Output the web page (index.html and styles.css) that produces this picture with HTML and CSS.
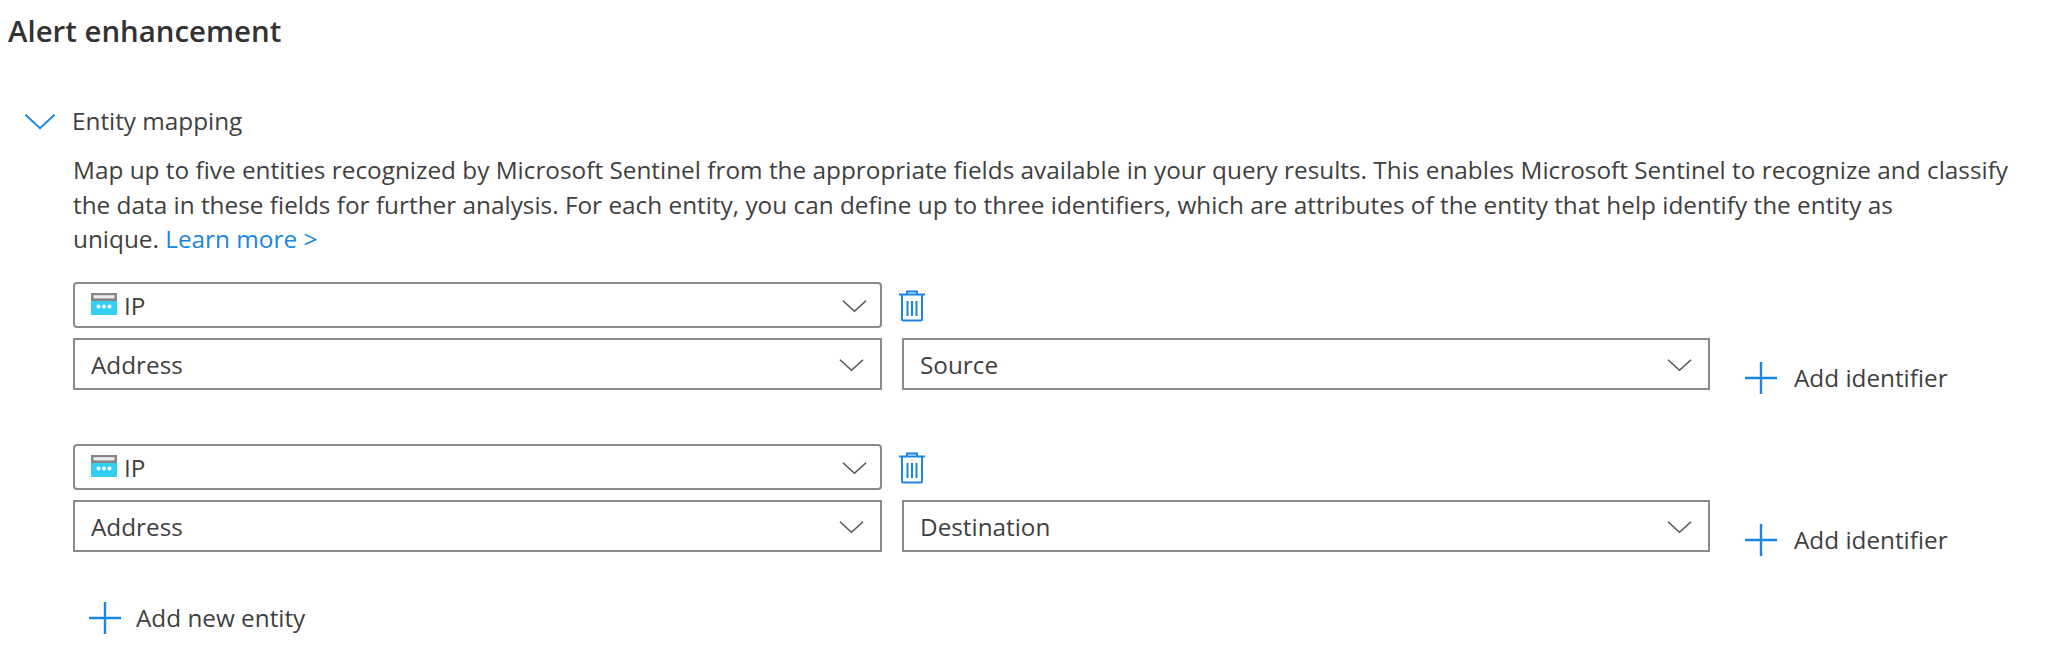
FILE: index.html
```html
<!DOCTYPE html>
<html lang="en">
<head>
<meta charset="utf-8">
<title>Alert enhancement</title>
<link rel="stylesheet" href="styles.css">
</head>
<body>
<svg class="defs" width="0" height="0" aria-hidden="true">
  <symbol id="chev" viewBox="0 0 26 14"><path d="M1 1.5 13 12.5 25 1.5" fill="none" stroke="currentColor" stroke-width="1.6"/></symbol>
  <symbol id="plus" viewBox="0 0 32 32"><path d="M16 0V32M0 16H32" fill="none" stroke="#1a86e0" stroke-width="2.4"/></symbol>
  <symbol id="trash" viewBox="0 0 26 32">
    <path d="M0 4.5H26M8 4V1.5H18V4M3 5V29A1.5 1.5 0 0 0 4.5 30.5H21.500A1.500 1.500 0 0 0 23 29V5M8.500 11V26M13 11V26M17.500 11V26" fill="none" stroke="#1a86e0" stroke-width="2"/>
  </symbol>
  <symbol id="ip" viewBox="0 0 26 22">
    <rect width="26" height="22" fill="#32d0f2"/>
    <rect width="26" height="8" fill="#858585"/>
    <rect x="2.5" y="2.2" width="21" height="3.200" fill="#eeeeee"/>
    <circle cx="7.500" cy="13.500" r="2" fill="#fff"/><circle cx="13" cy="13.500" r="2" fill="#fff"/><circle cx="18.500" cy="13.500" r="2" fill="#fff"/>
  </symbol>
</svg>
<main class="page">
  <h1 class="title">Alert enhancement</h1>
  <div class="section-head">
    <svg class="section-chev"><use href="#chev"/></svg>
    <span>Entity mapping</span>
  </div>
  <div class="section-body">
    <p class="desc">Map up to five entities recognized by Microsoft Sentinel from the appropriate fields available in your query results. This enables Microsoft Sentinel to recognize and classify<br>the data in these fields for further analysis. For each entity, you can define up to three identifiers, which are attributes of the entity that help identify the entity as<br>unique. <a class="link" href="#">Learn more &gt;</a></p>

    <div class="entity">
      <div class="entity-row">
        <div class="select select-entity"><svg class="ip-icon"><use href="#ip"/></svg><span>IP</span><svg class="chev"><use href="#chev"/></svg></div>
        <svg class="trash"><use href="#trash"/></svg>
      </div>
      <div class="id-row">
        <div class="select select-field"><span>Address</span><svg class="chev"><use href="#chev"/></svg></div>
        <div class="select select-value"><span>Source</span><svg class="chev"><use href="#chev"/></svg></div>
        <div class="add add-id"><svg class="plus"><use href="#plus"/></svg><span>Add identifier</span></div>
      </div>
    </div>

    <div class="entity">
      <div class="entity-row">
        <div class="select select-entity"><svg class="ip-icon"><use href="#ip"/></svg><span>IP</span><svg class="chev"><use href="#chev"/></svg></div>
        <svg class="trash"><use href="#trash"/></svg>
      </div>
      <div class="id-row">
        <div class="select select-field"><span>Address</span><svg class="chev"><use href="#chev"/></svg></div>
        <div class="select select-value"><span>Destination</span><svg class="chev"><use href="#chev"/></svg></div>
        <div class="add add-id"><svg class="plus"><use href="#plus"/></svg><span>Add identifier</span></div>
      </div>
    </div>

    <div class="add add-entity"><svg class="plus"><use href="#plus"/></svg><span>Add new entity</span></div>
  </div>
</main>
</body>
</html>
```
FILE: styles.css
```css
html, body { margin: 0; padding: 0; background: #fff; }
body {
  width: 2046px;
  height: 667px;
  overflow: hidden;
  font-family: "Open Sans", "Noto Sans", sans-serif;
  font-size: 24.3px;
  line-height: 32px;
  color: #3f3f3f;
}
.defs { display: block; height: 0; }
.page { padding: 12px 0 0 8px; }
.title {
  margin: 0;
  font-size: 29.4px;
  line-height: 38px;
  font-weight: 600;
  color: #323232;
}
.section-head {
  display: flex;
  align-items: center;
  gap: 16px;
  margin: 55px 0 0 16px;
  height: 32px;
}
.section-chev { width: 32px; height: 17px; color: #1a86e0; }
.section-body { padding-left: 65px; }
.desc {
  margin: 16px 0 0;
  line-height: 34.5px;
  font-size: 24.35px;
  white-space: nowrap;
}
.link { color: #1a86e0; text-decoration: none; }
.entity { margin-top: 25px; }
.entity + .entity { margin-top: 50px; }
.entity-row { display: flex; align-items: center; gap: 17px; }
.id-row { display: flex; align-items: flex-start; margin-top: 10px; }
.select {
  display: flex;
  align-items: center;
  box-sizing: border-box;
  border: 2px solid #8a8a8a;
  background: #fff;
}
.select-entity { width: 809px; height: 46px; border-radius: 4px; padding: 2px 13px 0 16px; }
.select-field { width: 809px; height: 52px; padding: 2px 16px 0 16px; }
.select-value { width: 808px; height: 52px; margin-left: 20px; padding: 2px 16px 0 16px; }
.select .chev { margin-left: auto; width: 25px; height: 14px; color: #555; }
.ip-icon { width: 26px; height: 22px; margin-right: 7px; margin-top: -3px; }
.trash { width: 26px; height: 32px; margin-top: 2px; }
.add { display: flex; align-items: center; gap: 17px; }
.plus { width: 32px; height: 32px; flex: none; }
.add-id { margin: 24px 0 0 35px; }
.add-entity { margin: 46px 0 0 16px; gap: 15px; }
```
